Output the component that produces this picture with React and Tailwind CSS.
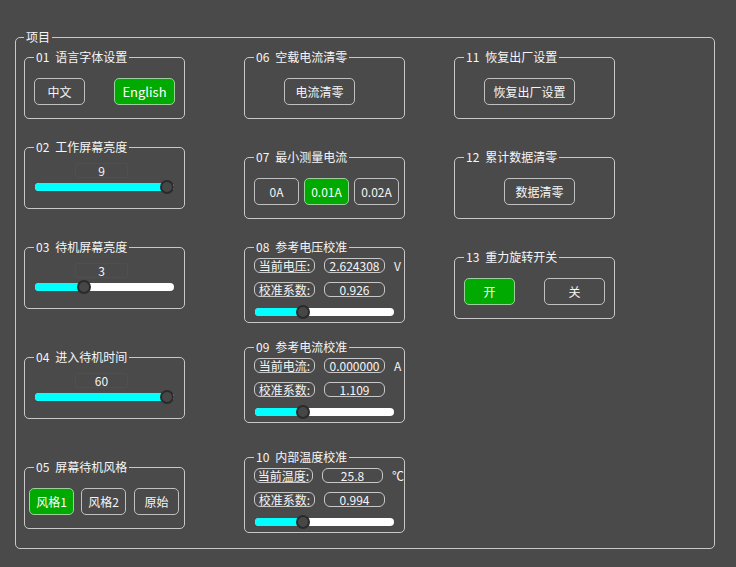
import React from "react";

const Group = ({ title, className, children }) => {
  const [num, ...rest] = title.split(" ");
  return (
    <div className={"relative border border-[#c8c8c8] rounded-[5px] w-[161px] " + className}>
      <span className="absolute left-[9px] -top-[9px] px-[2px] bg-[#4a4a4a] text-[12px] leading-[16px] whitespace-nowrap text-[#f6f6f6] flex">
        <span>{num}</span>
        <span className="ml-[6px]">{rest.join(" ")}</span>
      </span>
      {children}
    </div>
  );
};

const Btn = ({ children, active, className }) => (
  <div
    className={
      "h-[27px] border rounded-[5px] text-[12px] flex items-center justify-center shrink-0 " +
      (active ? "bg-[#00aa00] border-[#9ccf9c] text-white " : "border-[#c0c0c0] text-[#f6f6f6] ") +
      className
    }
  >
    {children}
  </div>
);

const Slider = ({ frac, className }) => {
  const c = 7 + frac * 125;
  return (
    <div className={"relative h-[8px] w-[139px] rounded-full bg-white " + className}>
      <div className="h-full rounded-l-full bg-[#00ffff]" style={{ width: c }} />
      <div
        className="absolute top-1/2 -translate-y-1/2 w-[14px] h-[14px] rounded-full border-2 border-[#2a2a2a] bg-[#474747]"
        style={{ left: c - 7 }}
      />
    </div>
  );
};

const ValueBox = ({ v }) => (
  <div className="ml-[50px] w-[53px] h-[15px] border border-[#4f4f4f] rounded-[2px] flex items-center justify-center text-[12px] leading-none text-[#f6f6f6]">
    {v}
  </div>
);

const Pill = ({ children }) => (
  <div className="w-[61px] h-[15px] border border-[#c8c8c8] rounded-[6px] flex items-center justify-center text-[12px] leading-none text-[#f6f6f6] whitespace-nowrap">
    {children}
  </div>
);

const CalRow = ({ label, value, unit }) => (
  <div className="flex items-center h-[15px]">
    <Pill>{label}</Pill>
    <div className="ml-[9px]">
      <Pill>{value}</Pill>
    </div>
    {unit && <span className="ml-[9px] text-[12px] leading-none text-[#f6f6f6]">{unit}</span>}
  </div>
);

const SliderGroup = ({ title, value, frac, mt }) => (
  <Group title={title} className={"h-[62px] " + mt}>
    <div className="pt-[15px]">
      <ValueBox v={value} />
      <Slider frac={frac} className="mt-[5px] ml-[10px]" />
    </div>
  </Group>
);

const CalGroup = ({ title, l1, v1, unit, v2, mt }) => (
  <Group title={title} className={"h-[76px] " + mt}>
    <div className="pt-[10px] pl-[9px]">
      <CalRow label={l1} value={v1} unit={unit} />
      <div className="mt-[9px]">
        <CalRow label="校准系数:" value={v2} />
      </div>
      <Slider frac={0.328} className="mt-[11px] ml-[1px]" />
    </div>
  </Group>
);

export default function App() {
  return (
    <div
      className="w-[736px] h-[567px] bg-[#4a4a4a] text-[#f6f6f6] pt-[37px] pl-[15px]"
      style={{ fontFamily: '"Noto Sans CJK SC", "Noto Sans", sans-serif' }}
    >
      <div className="relative w-[700px] h-[512px] border border-[#c8c8c8] rounded-[5px] pt-[19px] pl-[8px] flex">
        <span className="absolute left-[8px] -top-[9px] px-[2px] bg-[#4a4a4a] text-[12px] leading-[16px]">项目</span>

        {/* column 1 */}
        <div className="flex flex-col w-[161px]">
          <Group title="01 语言字体设置" className="h-[62px]">
            <div className="flex pt-[20px] pl-[9px]">
              <Btn className="w-[51px]">中文</Btn>
              <Btn active className="w-[61px] ml-[29px] text-[13px]">English</Btn>
            </div>
          </Group>
          <SliderGroup title="02 工作屏幕亮度" value="9" frac={1} mt="mt-[28px]" />
          <SliderGroup title="03 待机屏幕亮度" value="3" frac={3 / 9} mt="mt-[38px]" />
          <SliderGroup title="04 进入待机时间" value="60" frac={1} mt="mt-[48px]" />
          <Group title="05 屏幕待机风格" className="h-[62px] mt-[48px]">
            <div className="flex pt-[20px] pl-[4px]">
              <Btn active className="w-[45px]">风格1</Btn>
              <Btn className="w-[45px] ml-[7px]">风格2</Btn>
              <Btn className="w-[45px] ml-[8px]">原始</Btn>
            </div>
          </Group>
        </div>

        {/* column 2 */}
        <div className="flex flex-col w-[161px] ml-[59px]">
          <Group title="06 空载电流清零" className="h-[62px]">
            <div className="flex pt-[20px] pl-[39px]">
              <Btn className="w-[71px]">电流清零</Btn>
            </div>
          </Group>
          <Group title="07 最小测量电流" className="h-[62px] mt-[38px]">
            <div className="flex pt-[20px] pl-[9px]">
              <Btn className="w-[45px]">0A</Btn>
              <Btn active className="w-[45px] ml-[5px]">0.01A</Btn>
              <Btn className="w-[45px] ml-[5px]">0.02A</Btn>
            </div>
          </Group>
          <CalGroup title="08 参考电压校准" l1="当前电压:" v1="2.624308" unit="V" v2="0.926" mt="mt-[28px]" />
          <CalGroup title="09 参考电流校准" l1="当前电流:" v1="0.000000" unit="A" v2="1.109" mt="mt-[24px]" />
          <CalGroup title="10 内部温度校准" l1="当前温度:" v1="25.8" unit="℃" v2="0.994" mt="mt-[34px]" />
        </div>

        {/* column 3 */}
        <div className="flex flex-col w-[161px] ml-[49px]">
          <Group title="11 恢复出厂设置" className="h-[62px]">
            <div className="flex pt-[20px] pl-[29px]">
              <Btn className="w-[91px]">恢复出厂设置</Btn>
            </div>
          </Group>
          <Group title="12 累计数据清零" className="h-[62px] mt-[38px]">
            <div className="flex pt-[20px] pl-[49px]">
              <Btn className="w-[71px]">数据清零</Btn>
            </div>
          </Group>
          <Group title="13 重力旋转开关" className="h-[62px] mt-[38px]">
            <div className="flex pt-[20px] pl-[9px]">
              <Btn active className="w-[51px]">开</Btn>
              <Btn className="w-[61px] ml-[29px]">关</Btn>
            </div>
          </Group>
        </div>
      </div>
    </div>
  );
}
